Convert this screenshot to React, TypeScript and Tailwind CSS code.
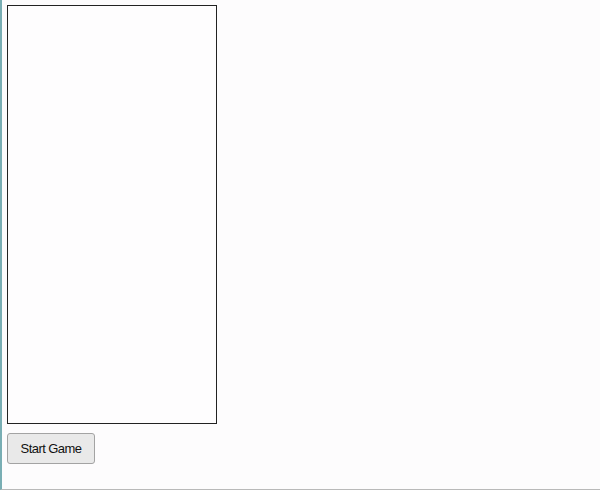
export default function App() {
  return (
    <div className="h-[490px] w-[600px] bg-[#fdfcfd] border-l-2 border-[#79aeb4] border-b border-b-[#b9b9b9] pl-[5px] pt-[5px] flex flex-col items-start" style={{ fontFamily: '"Liberation Sans", Arial, sans-serif' }}>
      <div className="w-[210px] h-[419px] border border-[#222] bg-[#fefdfe]" />
      <button className="mt-[9px] w-[88px] h-[31px] bg-[#e9e9e9] border border-[#a3a3a3] rounded-[3px] text-[13px] tracking-[-0.55px] text-[#111]">
        Start Game
      </button>
    </div>
  );
}
